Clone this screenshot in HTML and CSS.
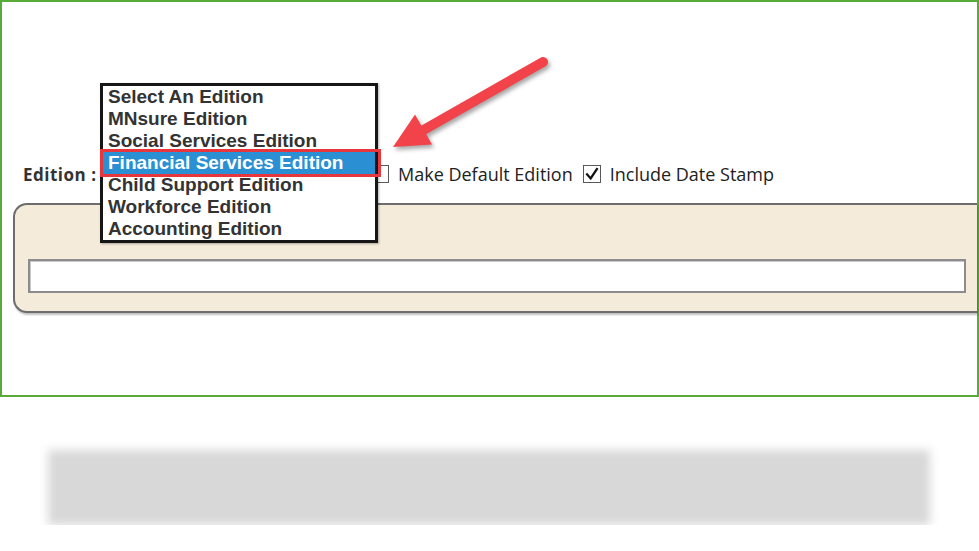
FILE: index.html
```html
<!DOCTYPE html>
<html lang="en">
<head>
<meta charset="utf-8">
<title>Edition</title>
<link rel="stylesheet" href="styles.css">
</head>
<body>
<div class="frame">
  <div class="edition-row">
    <span class="edition-label">Edition :</span>
    <div class="select-closed"></div>
    <label class="check">
      <span class="box"></span>
      <span class="check-text">Make Default Edition</span>
    </label>
    <label class="check">
      <span class="box checked">
        <svg viewBox="0 0 18 18" width="18" height="18"><path d="M3.5 9.5 L7.5 14 L14.5 3.5" fill="none" stroke="#111" stroke-width="2.6" stroke-linecap="square" stroke-linejoin="miter"/></svg>
      </span>
      <span class="check-text">Include Date Stamp</span>
    </label>
  </div>

  <div class="panel">
    <div class="panel-input"></div>
  </div>

  <ul class="listbox">
    <li>Select An Edition</li>
    <li>MNsure Edition</li>
    <li>Social Services Edition</li>
    <li class="selected">Financial Services Edition</li>
    <li>Child Support Edition</li>
    <li>Workforce Edition</li>
    <li>Accounting Edition</li>
  </ul>
  <div class="highlight-box"></div>

  <svg class="arrow" viewBox="378 48 180 112" width="180" height="112">
    <line x1="543" y1="62" x2="420" y2="132" stroke="#f2434a" stroke-width="10" stroke-linecap="round"/>
    <polygon points="393,147 415,114.5 432,144.5" fill="#f2434a"/>
  </svg>
</div>

<div class="blur-bar"></div>
</body>
</html>
```

FILE: styles.css
```css
* { box-sizing: border-box; }

body {
  margin: 0;
  background: #ffffff;
  font-family: "Open Sans", "Noto Sans", "Liberation Sans", sans-serif;
  color: #222;
}

.frame {
  position: relative;
  width: 979px;
  height: 397px;
  border: 2px solid #58ab38;
  padding-top: 160px;
}

.edition-row {
  display: flex;
  align-items: center;
  height: 24px;
  padding-left: 21px;
}

.edition-label {
  width: 77px;
  font-weight: 700;
  font-size: 17px;
  letter-spacing: 0.5px;
  color: #333;
  white-space: nowrap;
}

.select-closed {
  width: 271px;
  height: 22px;
}

.check {
  display: flex;
  align-items: center;
  margin-right: 10px;
}

.box {
  width: 18px;
  height: 18px;
  border: 1.5px solid #5a5a5a;
  background: #fff;
  display: flex;
  align-items: center;
  justify-content: center;
  margin-right: 9px;
}

.box svg { display: block; }

.check-text {
  font-size: 18px;
  color: #222;
  white-space: nowrap;
}

.panel {
  margin: 17px 0 0 11px;
  height: 110px;
  background: #f4ebda;
  border: 2px solid #6d6d6d;
  border-right: none;
  border-radius: 14px 0 0 14px;
  box-shadow: 1px 2px 2px rgba(0, 0, 0, 0.25);
  padding: 54px 11px 0 13px;
}

.panel-input {
  height: 34px;
  background: #fff;
  border: 2px solid #8c8c8c;
  box-shadow: inset 1px 1px 0 #c8c8c8;
}

.listbox {
  position: absolute;
  left: 98px;
  top: 81px;
  width: 278px;
  margin: 0;
  padding: 0;
  list-style: none;
  background: #fff;
  border: 3px solid #161616;
  box-shadow: 1px 1px 2px rgba(0, 0, 0, 0.3);
  font-family: "Liberation Sans", Arial, sans-serif;
  font-weight: 700;
  font-size: 19px;
  color: #333;
}

.listbox li {
  height: 22px;
  line-height: 22px;
  padding-left: 5px;
  white-space: nowrap;
}

.listbox li.selected {
  background: #2b8fd3;
  color: #fff;
}

.highlight-box {
  position: absolute;
  left: 98px;
  top: 147px;
  width: 281px;
  height: 28px;
  border: 3.5px solid #e8363d;
}

.arrow {
  position: absolute;
  left: 376px;
  top: 46px;
  overflow: visible;
  filter: drop-shadow(2px 3px 2px rgba(0, 0, 0, 0.35));
}

.blur-bar {
  margin: 53px 49px 0 48px;
  height: 75px;
  background: #d8d8d8;
  filter: blur(5px);
}
```
